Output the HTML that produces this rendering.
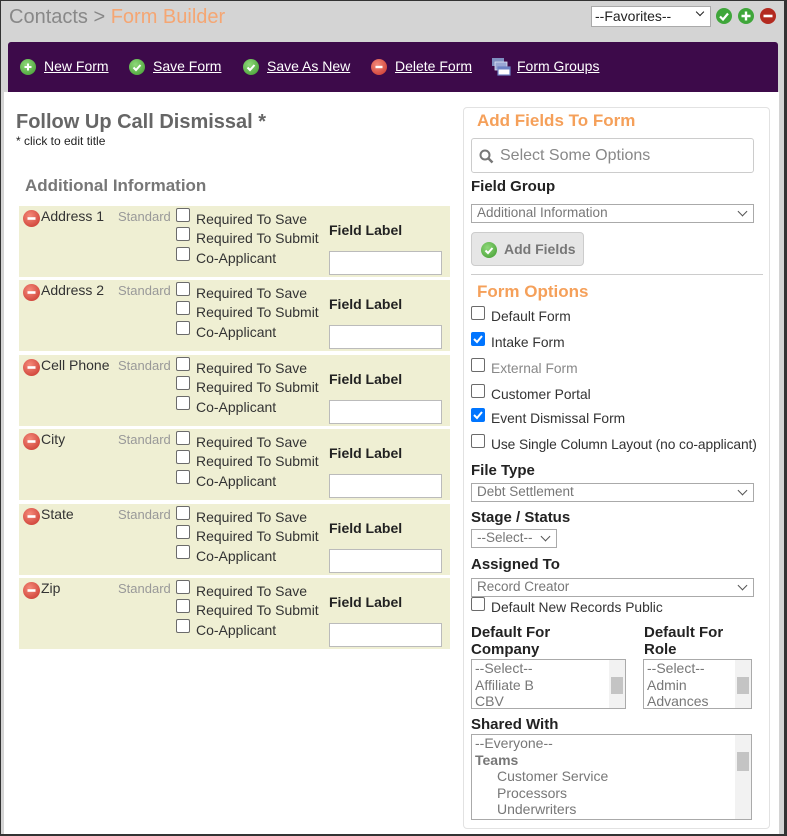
<!DOCTYPE html>
<html><head><meta charset="utf-8"><style>
*{box-sizing:border-box;margin:0;padding:0}
body{width:787px;height:836px;position:relative;background:#d4d4d4;font-family:"Liberation Sans",Arial,sans-serif;overflow:hidden}
.a{position:absolute;white-space:nowrap}
.frame{position:absolute;left:0;top:0;width:787px;height:836px;border-left:1px solid #333;border-right:3px solid #333;border-bottom:2px solid #333;border-top:1px solid #333;pointer-events:none}
.white{position:absolute;left:4px;top:92px;width:775px;height:742px;background:#fff}
.bar{position:absolute;left:8px;top:42px;width:770px;height:50px;background:#3d0a4a;border-radius:3px 3px 0 0}
.bar a{position:absolute;top:16px;color:#fff;font-size:14px;text-decoration:underline}
.ic{position:absolute;width:16px;height:16px;border-radius:50%}
.g{background:radial-gradient(circle at 40% 35%,#8fd87a,#3f9a2e)}
.r{background:radial-gradient(circle at 40% 35%,#f58a7a,#c6322a)}
.ic svg{position:absolute;left:0;top:0}
.row{position:absolute;left:19px;width:431px;height:71px;background:#efefd3}
.row .nm{position:absolute;left:22px;top:2px;font-size:14px;color:#333}
.row .st{position:absolute;left:99px;top:3px;font-size:13px;color:#999}
.cb{position:absolute;width:14px;height:14px;border:1px solid #6b6b6b;border-radius:2px;background:#fff}
.cbc{position:absolute;width:14px;height:14px;border-radius:2px;background:#0075ff}
.row .lb{position:absolute;left:177px;font-size:14px;color:#333}
.row .fl{position:absolute;left:310px;top:16px;font-size:14px;font-weight:bold;color:#222}
.row .in{position:absolute;left:310px;top:45px;width:113px;height:24px;border:1px solid #bbb;background:#fff}
.panel{position:absolute;left:463px;top:107px;width:307px;height:722px;border:1px solid #e2e2e2;border-radius:4px;background:#fff}
.h{position:absolute;font-size:17px;font-weight:bold;color:#f5a05a}
.b{position:absolute;font-size:15px;font-weight:bold;color:#222}
.opt{position:absolute;font-size:13.8px;color:#333;white-space:nowrap}
.sel{position:absolute;height:19px;border:1px solid #aaa;background:#fff;font-size:13.5px;color:#777;padding:0 0 0 5px;line-height:16px}
.sel:after{content:"";position:absolute;right:7px;top:3px;width:6px;height:6px;border-right:1.5px solid #555;border-bottom:1.5px solid #555;transform:rotate(45deg)}
.lst{position:absolute;border:1px solid #aaa;background:#fff;font-size:14px;color:#777;line-height:16.5px;padding-left:3px;overflow:hidden}
.sb{position:absolute;right:0;top:0;width:16px;height:100%;background:#f2f2f2}
.sb i{position:absolute;left:2px;width:12px;background:#c4c4c4}
</style></head><body>
<div class="white"></div>
<div class="a" style="left:9px;top:6px;font-size:20px;color:#888">Contacts &gt; <span style="color:#f5a673">Form Builder</span></div>
<div class="a" style="left:591px;top:6px;width:120px;height:21px;border:1px solid #aaa;background:#fff;font-size:14px;color:#222;padding:1px 0 0 3px">--Favorites--<span style="position:absolute;right:7px;top:2px;width:6px;height:6px;border-right:1.5px solid #222;border-bottom:1.5px solid #222;transform:rotate(45deg)"></span></div>
<div class="ic g" style="left:716px;top:8px;background:#3fa63a"><svg width="16" height="16"><path d="M4 8.5l3 3 5-6" stroke="#fff" stroke-width="2.2" fill="none"/></svg></div>
<div class="ic g" style="left:738px;top:8px;background:#3fa63a"><svg width="16" height="16"><path d="M8 3.5v9M3.5 8h9" stroke="#fff" stroke-width="2.4"/></svg></div>
<div class="ic r" style="left:760px;top:8px;background:#b32a20"><svg width="16" height="16"><path d="M3.5 8h9" stroke="#fff" stroke-width="2.6"/></svg></div>

<div class="bar">
<div class="ic g" style="left:12px;top:17px"><svg width="16" height="16"><path d="M8 4.5v7M4.5 8h7" stroke="#fff" stroke-width="2"/></svg></div><a style="left:36px">New Form</a>
<div class="ic g" style="left:121px;top:17px"><svg width="16" height="16"><path d="M4.5 8.5l2.5 2.5 4.5-5" stroke="#fff" stroke-width="2" fill="none"/></svg></div><a style="left:145px">Save Form</a>
<div class="ic g" style="left:235px;top:17px"><svg width="16" height="16"><path d="M4.5 8.5l2.5 2.5 4.5-5" stroke="#fff" stroke-width="2" fill="none"/></svg></div><a style="left:259px">Save As New</a>
<div class="ic r" style="left:363px;top:17px"><svg width="16" height="16"><path d="M4.5 8h7" stroke="#fff" stroke-width="2.4"/></svg></div><a style="left:387px">Delete Form</a>
<svg style="position:absolute;left:483px;top:15px" width="20" height="20"><rect x="1" y="1" width="12" height="8" fill="#7f8fc0"/><rect x="4" y="5" width="12" height="8" fill="#9aa7d4" stroke="#e0e6f5" stroke-width=".8"/><rect x="7" y="10" width="12" height="8" fill="#fff" stroke="#6d82c4" stroke-width="1.2"/><rect x="7" y="10" width="12" height="2.5" fill="#6d82c4"/></svg><a style="left:509px">Form Groups</a>
</div>

<div class="a" style="left:16px;top:111px;font-size:20px;font-weight:bold;color:#666">Follow Up Call Dismissal *</div>
<div class="a" style="left:16px;top:134px;font-size:12px;color:#222">* click to edit title</div>
<div class="a" style="left:25px;top:176px;font-size:17px;font-weight:bold;color:#777">Additional Information</div>

<div id="rows"></div>
<script>
var names=["Address 1","Address 2","Cell Phone","City","State","Zip"],tops=[206,280,355,429,504,578],h="";
var minus='<div class="ic r" style="left:4px;top:4px;width:17px;height:17px"><svg width="17" height="17"><path d="M4.5 8.5h8" stroke="#fff" stroke-width="2.6"/></svg></div>';
for(var i=0;i<6;i++){h+='<div class="row" style="top:'+tops[i]+'px">'+minus+'<div class="nm">'+names[i]+'</div><div class="st">Standard</div>'+
'<div class="cb" style="left:157px;top:2px"></div><div class="lb" style="top:5px">Required To Save</div>'+
'<div class="cb" style="left:157px;top:21px"></div><div class="lb" style="top:24px">Required To Submit</div>'+
'<div class="cb" style="left:157px;top:41px"></div><div class="lb" style="top:44px">Co-Applicant</div>'+
'<div class="fl">Field Label</div><div class="in"></div></div>';}
document.getElementById("rows").innerHTML=h;
</script>

<div class="panel"></div>
<div class="h" style="left:477px;top:111px">Add Fields To Form</div>
<div class="a" style="left:471px;top:138px;width:283px;height:35px;border:1px solid #ccc;border-radius:3px;background:#fff"><svg style="position:absolute;left:7px;top:10px" width="16" height="16"><circle cx="6" cy="6" r="4.5" stroke="#777" stroke-width="2" fill="none"/><path d="M9.5 9.5l4 4" stroke="#777" stroke-width="2.5"/></svg><span style="position:absolute;left:28px;top:8px;font-size:16px;color:#888">Select Some Options</span></div>
<div class="b" style="left:471px;top:178px">Field Group</div>
<div class="sel" style="left:471px;top:204px;width:283px">Additional Information</div>
<div class="a" style="left:471px;top:232px;width:113px;height:34px;border:1px solid #ccc;border-radius:4px;background:#e6e6e6"><div class="ic g" style="left:9px;top:9px"><svg width="16" height="16"><path d="M4.5 8.5l2.5 2.5 4.5-5" stroke="#fff" stroke-width="2" fill="none"/></svg></div><span style="position:absolute;left:32px;top:8px;font-size:14px;font-weight:bold;color:#777">Add Fields</span></div>
<div class="a" style="left:471px;top:274px;width:292px;height:1px;background:#ccc"></div>
<div class="h" style="left:477px;top:282px">Form Options</div>

<div class="cb" style="left:471px;top:306px"></div><div class="opt" style="left:491px;top:309px">Default Form</div>
<div class="cbc" style="left:471px;top:332px"><svg width="14" height="14"><path d="M3 7l3 3 5-6" stroke="#fff" stroke-width="2" fill="none"/></svg></div><div class="opt" style="left:491px;top:335px">Intake Form</div>
<div class="cb" style="left:471px;top:358px"></div><div class="opt" style="left:491px;top:361px;color:#888">External Form</div>
<div class="cb" style="left:471px;top:384px"></div><div class="opt" style="left:491px;top:387px">Customer Portal</div>
<div class="cbc" style="left:471px;top:408px"><svg width="14" height="14"><path d="M3 7l3 3 5-6" stroke="#fff" stroke-width="2" fill="none"/></svg></div><div class="opt" style="left:491px;top:411px">Event Dismissal Form</div>
<div class="cb" style="left:471px;top:434px"></div><div class="opt" style="left:491px;top:437px;letter-spacing:-0.1px">Use Single Column Layout (no co-applicant)</div>

<div class="b" style="left:471px;top:462px">File Type</div>
<div class="sel" style="left:471px;top:483px;width:283px">Debt Settlement</div>
<div class="b" style="left:471px;top:509px">Stage / Status</div>
<div class="sel" style="left:471px;top:529px;width:86px">--Select--</div>
<div class="b" style="left:471px;top:556px">Assigned To</div>
<div class="sel" style="left:471px;top:578px;width:283px">Record Creator</div>
<div class="cb" style="left:471px;top:597px"></div><div class="opt" style="left:491px;top:600px">Default New Records Public</div>

<div class="b" style="left:471px;top:624px;line-height:17px">Default For<br>Company</div>
<div class="b" style="left:644px;top:624px;line-height:17px">Default For<br>Role</div>
<div class="lst" style="left:471px;top:659px;width:155px;height:50px">--Select--<br>Affiliate B<br>CBV<div class="sb"><i style="top:17px;height:17px"></i></div></div>
<div class="lst" style="left:643px;top:659px;width:109px;height:50px">--Select--<br>Admin<br>Advances<div class="sb"><i style="top:17px;height:17px"></i></div></div>
<div class="b" style="left:471px;top:716px">Shared With</div>
<div class="lst" style="left:471px;top:734px;width:281px;height:86px">--Everyone--<br><b>Teams</b><br><span style="padding-left:22px">Customer Service</span><br><span style="padding-left:22px">Processors</span><br><span style="padding-left:22px">Underwriters</span><div class="sb"><i style="top:17px;height:19px"></i></div></div>

<div class="frame"></div>
</body></html>
